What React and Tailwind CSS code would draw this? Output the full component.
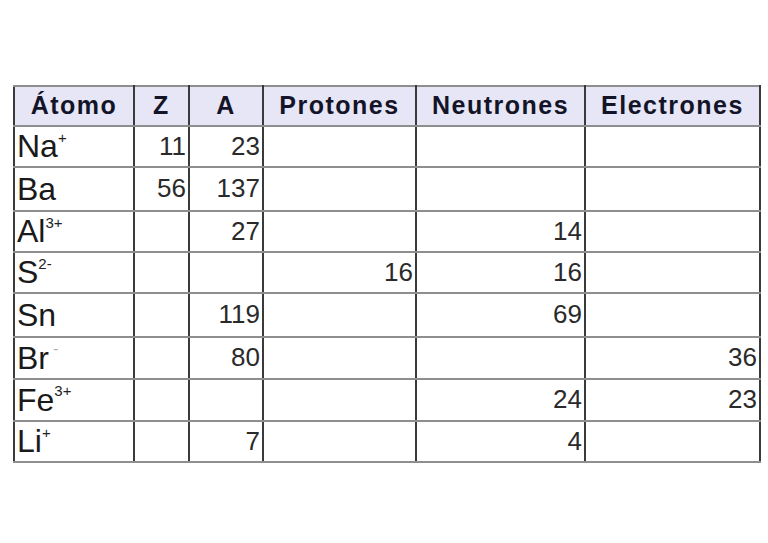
import React from "react"

// Tabla de partículas subatómicas
const rows = [
  { sym: "Na", sup: "+", z: "11", a: "23", p: "", n: "", e: "", h: "h-[41px]" },
  { sym: "Ba", sup: "", z: "56", a: "137", p: "", n: "", e: "", h: "h-[44px]" },
  { sym: "Al", sup: "3+", z: "", a: "27", p: "", n: "14", e: "", h: "h-[41px]" },
  { sym: "S", sup: "2-", z: "", a: "", p: "16", n: "16", e: "", h: "h-[41px]" },
  { sym: "Sn", sup: "", z: "", a: "119", p: "", n: "69", e: "", h: "h-[44px]" },
  { sym: "Br", sup: " -", z: "", a: "80", p: "", n: "", e: "36", h: "h-[42px]", light: true },
  { sym: "Fe", sup: "3+", z: "", a: "", p: "", n: "24", e: "23", h: "h-[42px]" },
  { sym: "Li", sup: "+", z: "", a: "7", p: "", n: "4", e: "", h: "h-[39px]" },
]

const headers = ["Átomo", "Z", "A", "Protones", "Neutrones", "Electrones"]

export default function App() {
  const cell = "border-y-2 border-y-[#8e8e8e] border-x-2 border-x-[#3a3a3a] p-0"
  const num = `${cell} text-right pr-[2px] align-middle text-[26px] text-[#2a2a2a]`

  return (
    <div className="w-[768px] h-[543px] bg-white pt-[85px] pl-[13px] font-['Liberation_Sans',Arial,sans-serif]">
      <table className="table-fixed border-collapse w-[746px] border-2 border-[#888]">
        <colgroup>
          <col className="w-[120px]" />
          <col className="w-[55px]" />
          <col className="w-[74px]" />
          <col className="w-[153px]" />
          <col className="w-[169px]" />
          <col className="w-[175px]" />
        </colgroup>
        <thead>
          <tr className="h-[39px] bg-[#e6e6f6]">
            {headers.map((h) => (
              <th
                key={h}
                className={`${cell} text-center align-middle text-[25px] font-bold tracking-[1.5px] text-[#141428]`}
              >
                {h}
              </th>
            ))}
          </tr>
        </thead>
        <tbody>
          {rows.map((r) => (
            <tr key={r.sym} className={r.h}>
              <td className={`${cell} text-left pl-[2px] align-middle text-[32px] leading-none text-[#1a1a1a]`}>
                {r.sym}
                {r.sup && (
                  <sup
                    className={`text-[15px] -top-[0.95em] ${r.light ? "text-[#aaa]" : "text-[#222]"}`}
                  >
                    {r.sup}
                  </sup>
                )}
              </td>
              <td className={num}>{r.z}</td>
              <td className={num}>{r.a}</td>
              <td className={num}>{r.p}</td>
              <td className={num}>{r.n}</td>
              <td className={num}>{r.e}</td>
            </tr>
          ))}
        </tbody>
      </table>
    </div>
  )
}
